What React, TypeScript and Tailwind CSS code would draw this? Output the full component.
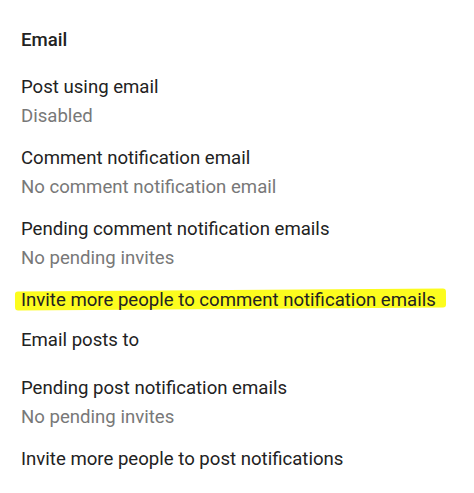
import React from 'react'

type Setting = {
    title: string
    value?: string
    highlight?: boolean
    className?: string
}

const settings: Setting[] = [
    { title: 'Post using email', value: 'Disabled' },
    { title: 'Comment notification email', value: 'No comment notification email' },
    { title: 'Pending comment notification emails', value: 'No pending invites' },
    { title: 'Invite more people to comment notification emails', highlight: true },
    { title: 'Email posts to', className: '-mt-[2px] mb-[6px]' },
    { title: 'Pending post notification emails', value: 'No pending invites' },
    { title: 'Invite more people to post notifications' },
]

export default function App() {
    return (
        <div
            className="min-h-screen bg-white pl-[21px] pt-[26px] text-[18.6px] leading-[29px] text-[#222222]"
            style={{ fontFamily: 'Roboto, "Noto Sans", Arial, sans-serif' }}
        >
            <p className="font-medium">Email</p>

            <div className="mt-[18px] flex flex-col gap-[13px]">
                {settings.map((item) => (
                    <div key={item.title} className={item.className}>
                        {item.highlight ? (
                            <p>
                                <span className="relative inline-block">
                                    <span className="absolute -left-[6px] -right-[10px] top-[4px] h-[19px] -rotate-[0.4deg] rounded-[3px] bg-[#fcfc1e]" />
                                    <span className="relative">{item.title}</span>
                                </span>
                            </p>
                        ) : (
                            <p>{item.title}</p>
                        )}
                        {item.value && (
                            <p className="text-[#787878]">{item.value}</p>
                        )}
                    </div>
                ))}
            </div>
        </div>
    )
}
